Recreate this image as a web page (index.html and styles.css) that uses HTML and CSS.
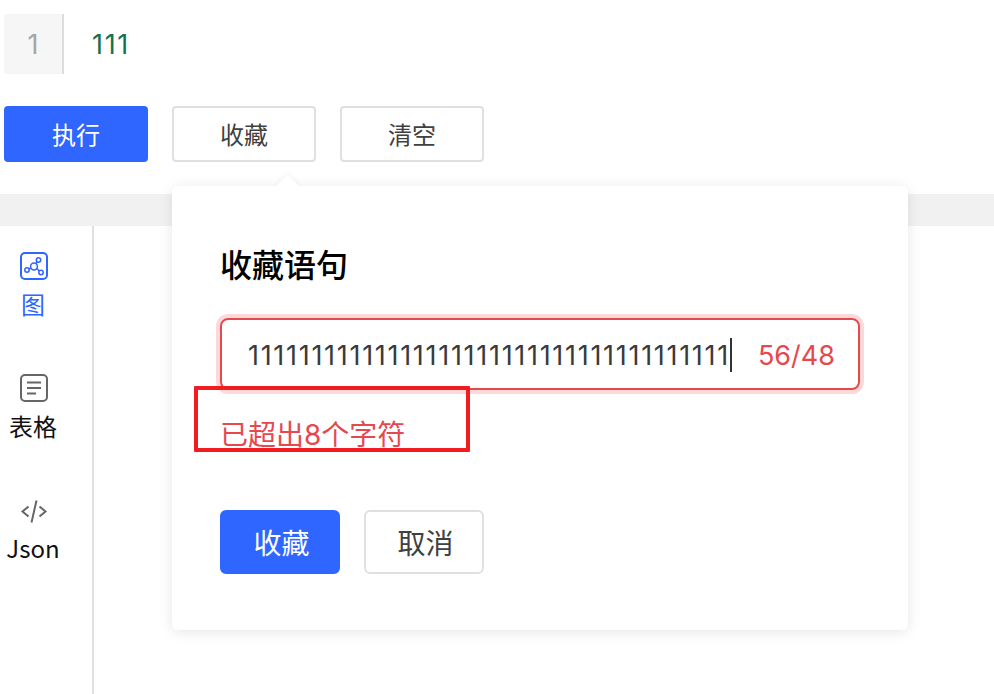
FILE: index.html
```html
<!DOCTYPE html>
<html lang="zh">
<head>
<meta charset="utf-8">
<title>收藏语句</title>
<link rel="stylesheet" href="styles.css">
</head>
<body>
<div class="page">
  <div class="editor">
    <div class="gutter">1</div>
    <div class="code">111</div>
  </div>
  <div class="toolbar">
    <button class="btn primary">执行</button>
    <button class="btn">收藏</button>
    <button class="btn">清空</button>
  </div>
  <div class="band"></div>
  <div class="result">
    <nav class="sidebar">
      <div class="tab active">
        <svg class="icon" viewBox="0 0 28 28" fill="none" stroke="currentColor"><rect x="1" y="1" width="26" height="26" rx="4" stroke-width="2"/><circle cx="14" cy="14.5" r="3.400" stroke-width="1.500"/><circle cx="18.500" cy="8" r="2.200" stroke-width="1.500"/><circle cx="7" cy="18" r="2.200" stroke-width="1.500"/><circle cx="21" cy="20.500" r="2.200" stroke-width="1.500"/><path d="M16 11.500l1.300-1.700M9 17l2-1M16.800 16.500l2.500 2.500" stroke-width="1.500"/></svg>
        <span>图</span>
      </div>
      <div class="tab">
        <svg class="icon gray" viewBox="0 0 28 28" fill="none" stroke="currentColor"><rect x="1" y="1" width="26" height="26" rx="4" stroke-width="2"/><path d="M7 8.500h14M7 14h14M7 19.500h9" stroke-width="2"/></svg>
        <span>表格</span>
      </div>
      <div class="tab">
        <svg class="icon gray" viewBox="0 0 28 28" fill="none" stroke="currentColor" stroke-width="2"><path d="M8.500 10.500l-6 5 6 5M19.500 10.500l6 5-6 5M16.500 4.500l-5 22"/></svg>
        <span>Json</span>
      </div>
    </nav>
  </div>

  <div class="popover">
    <h2 class="pop-title">收藏语句</h2>
    <div class="input error">
      <span class="value">11111111111111111111111111111111111111</span><span class="caret"></span>
      <span class="count">56/48</span>
    </div>
    <div class="message">已超出8个字符</div>
    <div class="actions">
      <button class="btn primary large">收藏</button>
      <button class="btn large">取消</button>
    </div>
  </div>
  <div class="annotation"></div>
</div>
</body>
</html>
```
FILE: styles.css
```css
* { box-sizing: border-box; }
html, body { margin: 0; height: 100%; background: #fff; overflow: hidden; }
body { font-family: "Noto Sans CJK SC", "Noto Sans", sans-serif; color: #333; }
.page { position: relative; height: 694px; padding-top: 14px; }

.editor { display: flex; height: 60px; padding-left: 4px; }
.gutter { width: 60px; padding-top: 1px; background: #f6f6f6; border-right: 2px solid #ddd; color: #a5a5a5; font: 27px/60px "Inter", sans-serif; text-align: center; }
.code { margin-left: 28px; padding-top: 1px; color: #17704c; font: 27px/60px "Inter", sans-serif; letter-spacing: 1.700px; }

.toolbar { display: flex; gap: 24px; margin-top: 32px; padding-left: 4px; }
.btn { width: 144px; height: 56px; padding: 0; border: 2px solid #e0e0e0; border-radius: 4px; background: #fff; color: #404040; font: 24px/1 "Noto Sans CJK SC", sans-serif; }
.btn.primary { background: #2e66ff; border-color: #2e66ff; color: #fff; }
.btn.large { width: 120px; height: 64px; padding: 0 0 0 3px; border-radius: 6px; font-size: 28px; }

.band { height: 32px; margin-top: 32px; background: #f1f1f1; }
.result { height: 468px; }
.sidebar { width: 94px; height: 100%; border-right: 2px solid #e0e0e0; padding: 26px 26px 0 0; display: flex; flex-direction: column; align-items: center; }
.tab { width: 66px; height: 122px; display: flex; flex-direction: column; align-items: center; color: #111; font: 24px/36px "Noto Sans CJK SC", sans-serif; }
.tab.active { color: #2e66ff; }
.icon { display: block; width: 28px; height: 28px; margin: 0 0 6px 2px; }
.icon.gray { color: #666; }
.tab span { height: 36px; }

.popover { position: absolute; left: 172px; top: 186px; width: 736px; height: 444px; padding: 54px 48px 0; background: #fff; border-radius: 6px; box-shadow: 0 2px 14px rgba(0,0,0,.1); }
.popover::before { content: ""; position: absolute; left: 107px; top: -8px; width: 17px; height: 17px; background: #fff; transform: rotate(45deg); box-shadow: -2px -2px 5px rgba(0,0,0,.04); }
.pop-title { position: relative; margin: 0; color: #000; font: 500 32px/46px "Noto Sans CJK SC", sans-serif; }
.input { display: flex; align-items: center; width: 640px; height: 72px; margin-top: 32px; padding: 2px 23px 0 26px; border: 2px solid #e5484d; border-radius: 8px; box-shadow: 0 0 0 4px #fbd9db; }
.value { color: #3a3a3a; font: 27px/1 "Inter", sans-serif; letter-spacing: 1.700px; }
.caret { width: 2px; height: 34px; background: #333; }
.count { margin-left: auto; color: #e5484d; font: 27px/1 "Inter", sans-serif; }
.message { margin-top: 27px; color: #e5484d; font: 28px/36px "Inter", "Noto Sans CJK SC", sans-serif; }
.actions { display: flex; gap: 24px; margin-top: 57px; }

.annotation { position: absolute; left: 194px; top: 386px; width: 276px; height: 66px; border: 4px solid #f01c1f; border-radius: 1px; }
```
